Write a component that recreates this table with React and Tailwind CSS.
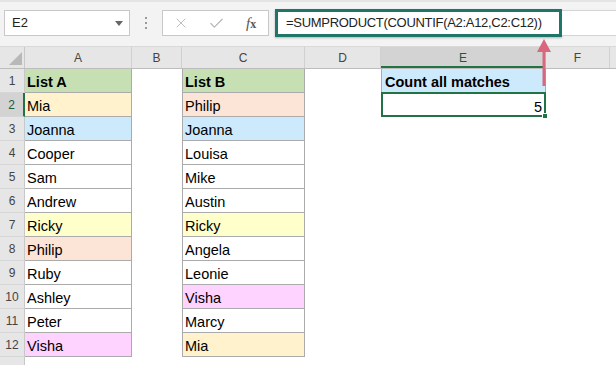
import React from 'react'
import { X, Check } from 'lucide-react'

const listA = [
  { t: 'List A', bg: 'bg-[#c6e0b4]', bold: true },
  { t: 'Mia', bg: 'bg-[#fff2cc]' },
  { t: 'Joanna', bg: 'bg-[#cde9fc]' },
  { t: 'Cooper', bg: 'bg-white' },
  { t: 'Sam', bg: 'bg-white' },
  { t: 'Andrew', bg: 'bg-white' },
  { t: 'Ricky', bg: 'bg-[#ffffcc]' },
  { t: 'Philip', bg: 'bg-[#fce4d6]' },
  { t: 'Ruby', bg: 'bg-white' },
  { t: 'Ashley', bg: 'bg-white' },
  { t: 'Peter', bg: 'bg-white' },
  { t: 'Visha', bg: 'bg-[#ffd3ff]' },
]

const listB = [
  { t: 'List B', bg: 'bg-[#c6e0b4]', bold: true },
  { t: 'Philip', bg: 'bg-[#fce4d6]' },
  { t: 'Joanna', bg: 'bg-[#cde9fc]' },
  { t: 'Louisa', bg: 'bg-white' },
  { t: 'Mike', bg: 'bg-white' },
  { t: 'Austin', bg: 'bg-white' },
  { t: 'Ricky', bg: 'bg-[#ffffcc]' },
  { t: 'Angela', bg: 'bg-white' },
  { t: 'Leonie', bg: 'bg-white' },
  { t: 'Visha', bg: 'bg-[#ffd3ff]' },
  { t: 'Marcy', bg: 'bg-white' },
  { t: 'Mia', bg: 'bg-[#fff2cc]' },
]

const cols = [
  { k: 'A', w: 'w-[107px]' },
  { k: 'B', w: 'w-[50px]' },
  { k: 'C', w: 'w-[123px]' },
  { k: 'D', w: 'w-[76px]' },
  { k: 'E', w: 'w-[165px]' },
  { k: 'F', w: 'w-[64px]' },
]

function Toolbar() {
  return (
    <div className="h-[46px] bg-[#f3f3f3] border-t-2 border-[#e4e4e4] flex items-start pt-[8px] pl-[4px]">
      <div className="w-[126px] h-[26px] bg-white border border-[#c8c8c8] flex items-center justify-between pl-[7px] pr-[6px] text-[13px] text-[#222]">
        <span>E2</span>
        <span className="w-0 h-0 border-l-[4px] border-r-[4px] border-t-[5px] border-l-transparent border-r-transparent border-t-[#666]" />
      </div>
      <div className="w-[32px] h-[26px] flex flex-col items-center justify-center gap-[3px]">
        <span className="w-[2px] h-[2px] bg-[#9a9a9a]" />
        <span className="w-[2px] h-[2px] bg-[#9a9a9a]" />
        <span className="w-[2px] h-[2px] bg-[#9a9a9a]" />
      </div>
      <div className="w-[107px] h-[26px] bg-white border border-[#c8c8c8] flex items-center pl-[10px] text-[#b4b4b4]">
        <X size={16} strokeWidth={1.3} />
        <Check size={17} strokeWidth={1.6} className="ml-[19px]" />
        <span className="ml-[21px] font-['Liberation_Serif'] italic text-[15px] text-[#555] leading-none">
          f<span className="text-[12px] not-italic font-bold">x</span>
        </span>
      </div>
      <div className="ml-[6px] flex-1 flex items-stretch">
        <div className="w-[287px] h-[28px] -mt-[1px] border-[3px] border-[#1e7568] bg-white flex items-center pl-[8px] text-[13px] tracking-[-0.3px] text-[#222] whitespace-nowrap shadow-[0_1px_2px_rgba(0,0,0,0.25)]">
          =SUMPRODUCT(COUNTIF(A2:A12,C2:C12))
        </div>
        <div className="flex-1 h-[26px] bg-white border-y border-[#d4d4d4]" />
      </div>
    </div>
  )
}

function HeaderRow() {
  return (
    <div className="flex h-[23px] bg-[#e6e6e6] border-t border-[#d9d9d9] border-b border-b-[#bdbdbd]">
      <div className="w-[25px] border-r border-[#c8c8c8] relative">
        <svg className="absolute right-[2px] bottom-[3px]" width="13" height="13" viewBox="0 0 13 13">
          <polygon points="13,0 13,13 0,13" fill="#b8b8b8" />
        </svg>
      </div>
      {cols.map((c) => (
        <div
          key={c.k}
          className={`${c.w} flex items-center justify-center text-[12px] border-r border-[#d0d0d0] ${
            c.k === 'E' ? 'bg-[#d3d3d3] text-[#1c5c38] shadow-[inset_0_-2px_0_#217346]' : 'text-[#444]'
          }`}
        >
          {c.k}
        </div>
      ))}
      <div className="flex-1" />
    </div>
  )
}

function Cell({ item, className }) {
  return (
    <div
      className={`h-full flex items-end pl-[2px] pb-[1px] text-[14.5px] leading-[17px] text-black ${item.bg} ${
        item.bold ? 'font-bold' : ''
      } ${className}`}
    >
      {item.t}
    </div>
  )
}

function Row({ n }) {
  const i = n - 1
  const selected = n === 2
  return (
    <div className="flex h-[24px]">
      <div
        className={`w-[25px] flex items-center justify-center text-[12px] border-b border-[#d6d6d6] ${
          selected
            ? 'bg-[#d3d3d3] text-[#1c5c38] border-r-2 border-r-[#217346]'
            : 'bg-[#e6e6e6] text-[#444] border-r border-r-[#c8c8c8]'
        }`}
      >
        {n}
      </div>
      <div className="w-[107px] h-full">
        <Cell item={listA[i]} className="border-r border-b border-[#ababab]" />
      </div>
      <div className="w-[50px]" />
      <div className="w-[123px] h-full">
        <Cell item={listB[i]} className="border-l border-r border-b border-[#ababab]" />
      </div>
      <div className="w-[76px]" />
      <div className="w-[165px] h-full relative">
        {n === 1 && (
          <div className="h-full flex items-end pl-[3px] pb-[1px] text-[14.5px] leading-[17px] font-bold bg-[#cde9fc] border-l border-r border-b border-[#ababab]">
            Count all matches
          </div>
        )}
        {n === 2 && (
          <div className="h-full flex items-end justify-end pr-[4px] pb-[1px] text-[14.5px] leading-[17px] bg-white">
            5
            <div className="absolute left-0 -top-[1px] right-0 bottom-0 border-2 border-[#217346]" />
            <div className="absolute -right-[2px] -bottom-[2px] w-[6px] h-[6px] bg-[#217346] border border-white" />
          </div>
        )}
      </div>
      <div className="flex-1" />
    </div>
  )
}

function Arrow() {
  return (
    <svg className="absolute left-[536px] top-[38px]" width="16" height="50" viewBox="0 0 16 50">
      <polygon points="8,1 15,14 1,14" fill="#d8687c" />
      <rect x="6.5" y="13" width="3" height="35" fill="#d8687c" />
    </svg>
  )
}

export default function App() {
  return (
    <div className="w-[616px] h-[365px] overflow-hidden relative bg-white font-['Liberation_Sans',Arial,sans-serif]">
      <Toolbar />
      <HeaderRow />
      {Array.from({ length: 12 }, (_, k) => (
        <Row key={k} n={k + 1} />
      ))}
      <div className="flex h-[24px]">
        <div className="w-[25px] bg-[#e6e6e6] border-r border-[#c8c8c8] flex items-start justify-center pt-[4px] text-[12px] text-[#444]">
          13
        </div>
      </div>
      <Arrow />
    </div>
  )
}
